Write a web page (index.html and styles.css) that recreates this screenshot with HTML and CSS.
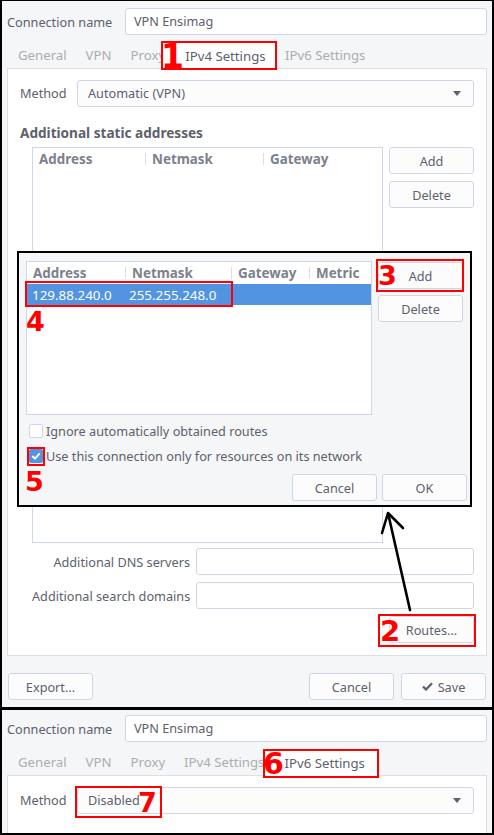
FILE: index.html
```html
<!DOCTYPE html>
<html>
<head>
<meta charset="utf-8">
<title>VPN Ensimag – IPv4 routes</title>
<link rel="stylesheet" href="styles.css">
</head>
<body>
<div class="shot">
  <div class="frame">
    <section class="win win-top">
      <div class="name-row">
        <span class="name-lbl">Connection name</span>
        <div class="entry">VPN Ensimag</div>
      </div>
      <div class="tabs">
        <span class="tab">General</span>
        <span class="tab">VPN</span>
        <span class="tab">Proxy</span>
        <span class="tab active"><span class="tab-label">IPv4 Settings</span></span>
        <span class="tab">IPv6 Settings</span>
      </div>
      <div class="panel">
        <div class="method-row">
          <span class="method-lbl">Method</span>
          <div class="combo"><span>Automatic (VPN)</span><svg class="caret" width="8" height="5" viewBox="0 0 8 5"><path d="M0 0H8L4 5Z" fill="#5c616c"/></svg></div>
        </div>
        <h3 class="section-title">Additional static addresses</h3>
        <div class="addr-area">
          <div class="tree tree-main">
            <div class="thead"><span class="th">Address</span><span class="th">Netmask</span><span class="th">Gateway</span></div>
          </div>
          <div class="btn-col">
            <button class="btn">Add</button>
            <button class="btn">Delete</button>
          </div>
        </div>
        <div class="form-grid">
          <span class="form-lbl">Additional DNS servers</span><div class="entry"></div>
          <span class="form-lbl">Additional search domains</span><div class="entry"></div>
        </div>
        <div class="routes-row"><button class="btn">Routes...</button></div>
      </div>
      <div class="actions">
        <button class="btn">Export...</button>
        <div class="spacer"></div>
        <button class="btn">Cancel</button>
        <button class="btn"><svg width="11" height="9" viewBox="0 0 11 9"><path d="M1 4.5 4 7.5 10 1.3" fill="none" stroke="#5c616c" stroke-width="2.3"/></svg>Save</button>
      </div>
    </section>
    <div class="sep"></div>
    <section class="win win-bottom">
      <div class="name-row">
        <span class="name-lbl">Connection name</span>
        <div class="entry">VPN Ensimag</div>
      </div>
      <div class="tabs">
        <span class="tab">General</span>
        <span class="tab">VPN</span>
        <span class="tab">Proxy</span>
        <span class="tab">IPv4 Settings</span>
        <span class="tab active"><span class="tab-label">IPv6 Settings</span></span>
      </div>
      <div class="panel panel-cut">
        <div class="method-row">
          <span class="method-lbl">Method</span>
          <div class="combo"><span>Disabled</span><svg class="caret" width="8" height="5" viewBox="0 0 8 5"><path d="M0 0H8L4 5Z" fill="#5c616c"/></svg></div>
        </div>
      </div>
    </section>
  </div>

  <div class="dialog">
    <div class="dlg-main">
      <div class="tree tree-dlg">
        <div class="thead"><span class="th">Address</span><span class="th">Netmask</span><span class="th">Gateway</span><span class="th">Metric</span></div>
        <div class="row sel"><span>129.88.240.0</span><span>255.255.248.0</span><span></span><span></span></div>
      </div>
      <div class="dlg-btns">
        <button class="btn">Add</button>
        <button class="btn">Delete</button>
      </div>
    </div>
    <div class="checks">
      <label class="check"><span class="cb"></span>Ignore automatically obtained routes</label>
      <label class="check"><span class="cb on"><svg width="10" height="8" viewBox="0 0 10 8"><path d="M1.3 4 4 6.6 8.7 1.4" fill="none" stroke="#fff" stroke-width="1.9"/></svg></span>Use this connection only for resources on its network</label>
    </div>
    <div class="dlg-actions">
      <button class="btn">Cancel</button>
      <button class="btn">OK</button>
    </div>
  </div>

  <svg class="arrow" width="40" height="110" viewBox="0 0 40 110">
    <path d="M35 105 13 8M7 28 13 8 28 23" fill="none" stroke="#000" stroke-width="2.6" stroke-linecap="round" stroke-linejoin="round"/>
  </svg>

  <div class="annot a1"></div>
  <div class="annot a2"></div>
  <div class="annot a3"></div>
  <div class="annot a4"></div>
  <div class="annot a5"></div>
  <div class="annot a6"></div>
  <div class="annot a7"></div>
  <span class="num n1">1</span>
  <span class="num n2">2</span>
  <span class="num n3">3</span>
  <span class="num n4">4</span>
  <span class="num n5">5</span>
  <span class="num n6">6</span>
  <span class="num n7">7</span>
</div>
</body>
</html>
```
FILE: styles.css
```css
body {
  margin: 0;
  font-family: "Noto Sans", "DejaVu Sans", sans-serif;
  font-size: 12.7px;
  color: #5c616c;
  background: #fff;
}

.shot {
  position: relative;
  width: 494px;
  height: 835px;
  overflow: hidden;
}

.frame {
  height: 835px;
  box-sizing: border-box;
  border: 2px solid #000;
  border-top-width: 1px;
  background: #f5f6f7;
  display: flex;
  flex-direction: column;
}

.win-top {
  flex: none;
  height: 706px;
  box-sizing: border-box;
  padding: 7px 5px 0;
}

.sep {
  flex: none;
  height: 3px;
  background: #000;
}

.win-bottom {
  flex: 1;
  min-height: 0;
  overflow: hidden;
  padding: 5px 5px 0;
}

.name-row {
  display: flex;
  align-items: center;
  height: 27px;
}

.name-lbl {
  flex: none;
  width: 118px;
}

.entry {
  flex: 1;
  height: 27px;
  box-sizing: border-box;
  border: 1px solid #cfd6e6;
  border-radius: 3px;
  background: #fff;
  padding: 0 8px 1px;
  display: flex;
  align-items: center;
}

.tabs {
  display: flex;
  height: 26px;
  margin-top: 7px;
  padding-left: 1.5px;
  font-size: 13.2px;
}

.tab {
  display: flex;
  align-items: center;
  padding: 0 9.5px;
  color: #a9adb4;
  white-space: nowrap;
}

.tab.active {
  position: relative;
  height: 27px;
  margin-bottom: -1px;
  box-sizing: border-box;
  background: #fff;
  border: 1px solid #dcdfe3;
  border-bottom: 0;
  border-radius: 3px 3px 0 0;
  padding: 0 9px 0 9.7px;
  color: #5c616c;
}

.tab-label {
  position: relative;
  z-index: 2;
}

.panel {
  background: #fff;
  border: 1px solid #dcdfe3;
  padding: 11px 12px 12px;
}

.panel-cut {
  height: 200px;
}

.method-row {
  display: flex;
  align-items: center;
  height: 27px;
}

.method-lbl {
  flex: none;
  width: 57px;
  padding-bottom: 1px;
}

.combo {
  flex: 1;
  height: 27px;
  box-sizing: border-box;
  border: 1px solid #cfd6e6;
  border-radius: 3px;
  background: #fcfcfc;
  display: flex;
  align-items: center;
  justify-content: space-between;
  padding: 0 12px 1px 10px;
}

.section-title {
  margin: 17px 0 5px;
  font-size: 13.6px;
  font-weight: bold;
  line-height: 18px;
}

.addr-area {
  display: flex;
  height: 396px;
  margin-left: 12px;
}

.tree {
  background: #fff;
  border: 1px solid #cfd6e6;
  box-sizing: border-box;
}

.tree-main {
  width: 351px;
}

.thead {
  display: grid;
  height: 22px;
}

.tree-main .thead {
  grid-template-columns: 112px 118px 1fr;
}

.th {
  display: flex;
  align-items: center;
  padding-left: 6px;
  font-size: 13.4px;
  font-weight: bold;
  color: #7c818c;
  white-space: nowrap;
}

.th + .th {
  padding-left: 0;
}

.th + .th::before {
  content: "";
  flex: none;
  width: 1px;
  height: 12px;
  background: #dcdfe3;
  margin-right: 6px;
}

.btn-col {
  display: flex;
  flex-direction: column;
  gap: 7px;
  margin-left: 6px;
}

.form-grid {
  display: grid;
  grid-template-columns: 158px 1fr;
  column-gap: 6px;
  row-gap: 7px;
  align-items: center;
  margin: 5px 0 0 12px;
}

.form-lbl {
  text-align: right;
  white-space: nowrap;
}

.routes-row {
  display: flex;
  justify-content: flex-end;
  margin-top: 7px;
}

.actions {
  display: flex;
  gap: 7px;
  margin-top: 17px;
  padding: 0 1px;
}

.spacer {
  flex: 1;
}

.btn {
  flex: none;
  width: 85px;
  height: 27px;
  box-sizing: border-box;
  border: 1px solid #cfd6e6;
  border-radius: 3px;
  background: #fcfcfc;
  font: inherit;
  color: #5c616c;
  display: flex;
  align-items: center;
  justify-content: center;
  gap: 5px;
  padding: 0;
}

/* Routes dialog */
.dialog {
  position: absolute;
  left: 17px;
  top: 251px;
  width: 455px;
  height: 256px;
  box-sizing: border-box;
  border: 2px solid #000;
  background: #f5f6f7;
  padding: 8px 3px 3px 7px;
  display: flex;
  flex-direction: column;
}

.dlg-main {
  display: flex;
  height: 154px;
}

.tree-dlg {
  width: 346px;
}

.tree-dlg .thead,
.tree-dlg .row {
  grid-template-columns: 98px 106px 78px 1fr;
}

.row {
  display: grid;
  height: 21px;
  align-items: center;
}

.row span {
  padding-left: 5px;
}

.row span + span {
  padding-left: 4px;
}

.row.sel {
  background: #5294e2;
  color: #fff;
  font-size: 13.4px;
}

.dlg-btns {
  display: flex;
  flex-direction: column;
  gap: 6px;
  margin-left: 6px;
  padding-top: 1px;
}

.checks {
  display: flex;
  flex-direction: column;
  gap: 3px;
  margin-top: 5px;
}

.check {
  display: flex;
  align-items: center;
  gap: 3px;
  height: 22px;
  margin-left: 3px;
}

.cb {
  flex: none;
  width: 14px;
  height: 14px;
  box-sizing: border-box;
  border: 1px solid #cfd6e6;
  border-radius: 2px;
  background: #fff;
}

.cb.on {
  background: #5294e2;
  border-color: #5294e2;
  display: flex;
  align-items: center;
  justify-content: center;
}

.dlg-actions {
  display: flex;
  justify-content: flex-end;
  gap: 5px;
  margin-top: 7px;
}

/* annotations */
.arrow {
  position: absolute;
  left: 375px;
  top: 505px;
}

.annot {
  position: absolute;
  box-sizing: border-box;
  border: 2px solid #f00;
  z-index: 1;
}

.a1 { left: 161px; top: 41px; width: 116px; height: 29px; background: #fff; }
.a2 { left: 378px; top: 614px; width: 98px; height: 33px; }
.a3 { left: 376px; top: 259px; width: 88px; height: 33px; }
.a4 { left: 25px; top: 281px; width: 208px; height: 26px; }
.a5 { left: 27px; top: 447px; width: 18px; height: 19px; }
.a6 { left: 263px; top: 749px; width: 116px; height: 29px; background: #fff; }
.a7 { left: 75px; top: 786px; width: 87px; height: 32px; }

.num {
  position: absolute;
  z-index: 3;
  font-family: "DejaVu Sans", sans-serif;
  font-weight: bold;
  color: #f00;
  line-height: 1;
}

.n1 { left: 161px; top: 40px; font-size: 33px; }
.n2 { left: 380px; top: 617px; font-size: 29px; }
.n3 { left: 378px; top: 262px; font-size: 27px; }
.n4 { left: 26px; top: 308px; font-size: 27px; }
.n5 { left: 25px; top: 468px; font-size: 27px; }
.n6 { left: 263px; top: 749px; font-size: 30px; }
.n7 { left: 138px; top: 789px; font-size: 27px; }
```
